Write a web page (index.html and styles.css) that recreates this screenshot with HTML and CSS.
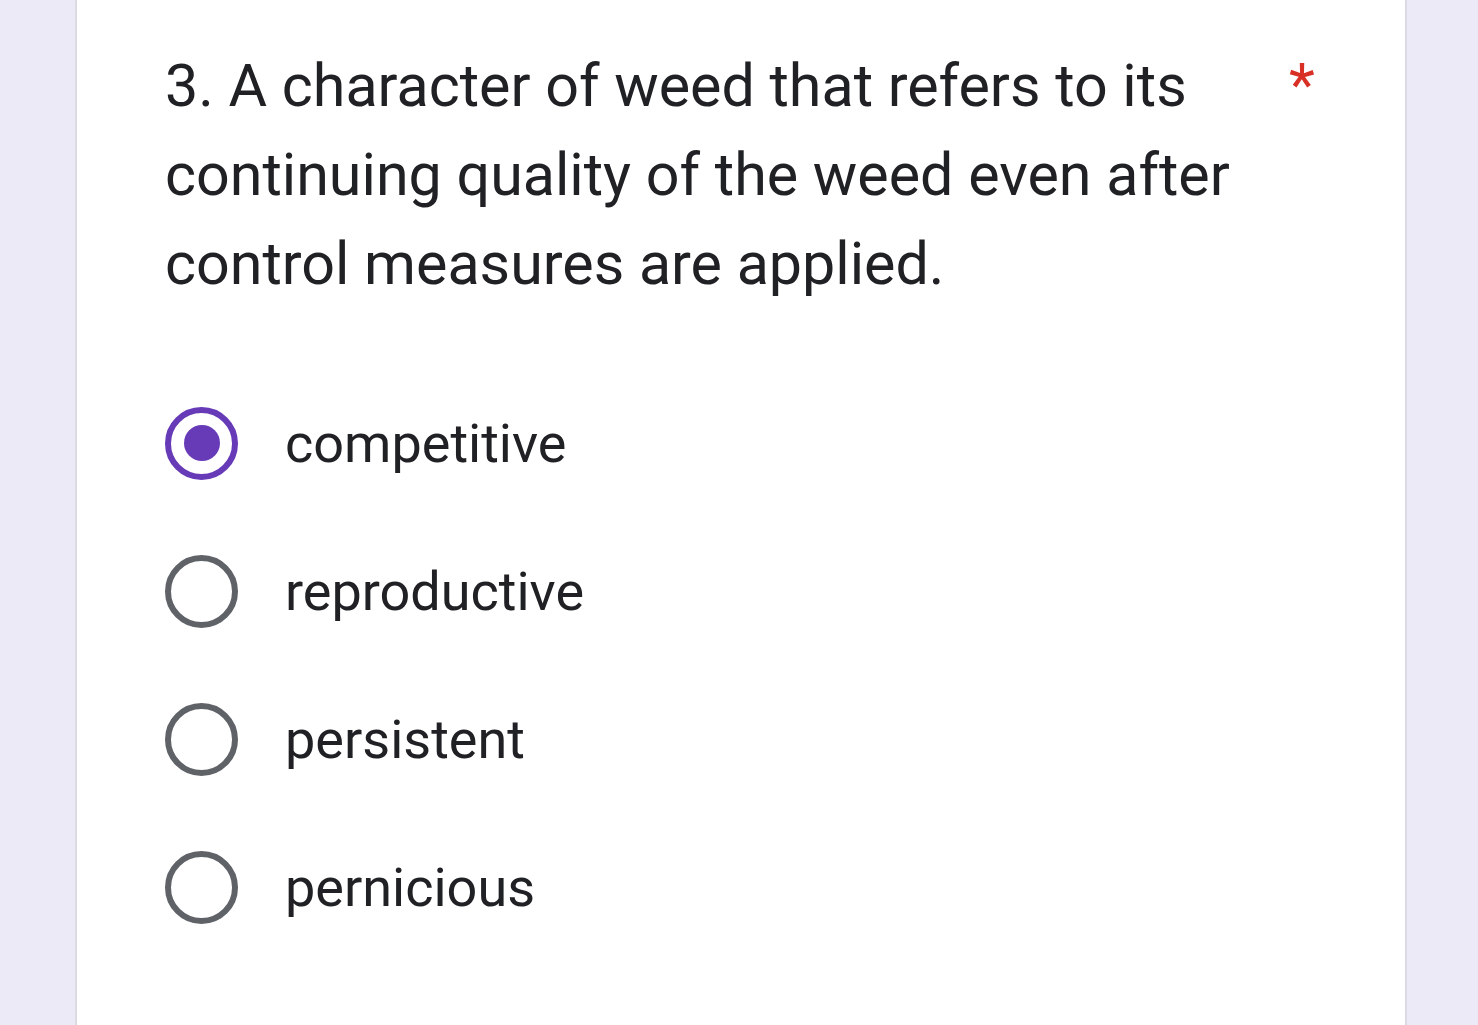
FILE: index.html
```html
<!DOCTYPE html>
<html>
<head>
<meta charset="utf-8">
<link rel="stylesheet" href="styles.css">
</head>
<body>
<div class="page">
  <div class="card">
    <div class="question">
      <div class="qtext">3. A character of weed that refers to its continuing quality of the weed even after control measures are applied.</div>
      <div class="req">*</div>
    </div>
    <div class="options">
      <div class="option">
        <span class="radio checked"><span class="dot"></span></span>
        <span class="label">competitive</span>
      </div>
      <div class="option">
        <span class="radio"></span>
        <span class="label">reproductive</span>
      </div>
      <div class="option">
        <span class="radio"></span>
        <span class="label">persistent</span>
      </div>
      <div class="option">
        <span class="radio"></span>
        <span class="label">pernicious</span>
      </div>
    </div>
  </div>
</div>
</body>
</html>
```
FILE: styles.css
```css
html, body {
  margin: 0;
  padding: 0;
  height: 100%;
  background: #edeaf8;
  overflow: hidden;
}
.page {
  height: 1025px;
  padding-left: 75px;
}
.card {
  width: 1328px;
  height: 1025px;
  background: #ffffff;
  border-left: 2px solid #dcdbe3;
  border-right: 2px solid #dcdbe3;
  box-sizing: content-box;
  font-family: Roboto, "Noto Sans", sans-serif;
  color: #202124;
}
.question {
  display: flex;
  padding: 41px 0 0 88px;
}
.qtext {
  width: 1100px;
  font-size: 59.2px;
  line-height: 89px;
}
.req {
  margin-left: 24px;
  margin-top: -1px;
  color: #d93025;
  font-size: 60px;
  line-height: 89px;
}
.options {
  padding: 61px 0 0 88px;
  display: flex;
  flex-direction: column;
}
.option {
  display: flex;
  align-items: center;
  height: 148px;
}
.radio {
  width: 61px;
  height: 61px;
  border: 6px solid #5f6368;
  border-radius: 50%;
  display: flex;
  align-items: center;
  justify-content: center;
  flex: none;
}
.radio.checked {
  border-color: #673ab7;
}
.dot {
  width: 36px;
  height: 36px;
  border-radius: 50%;
  background: #673ab7;
}
.label {
  margin-left: 47px;
  font-size: 54px;
}
```
